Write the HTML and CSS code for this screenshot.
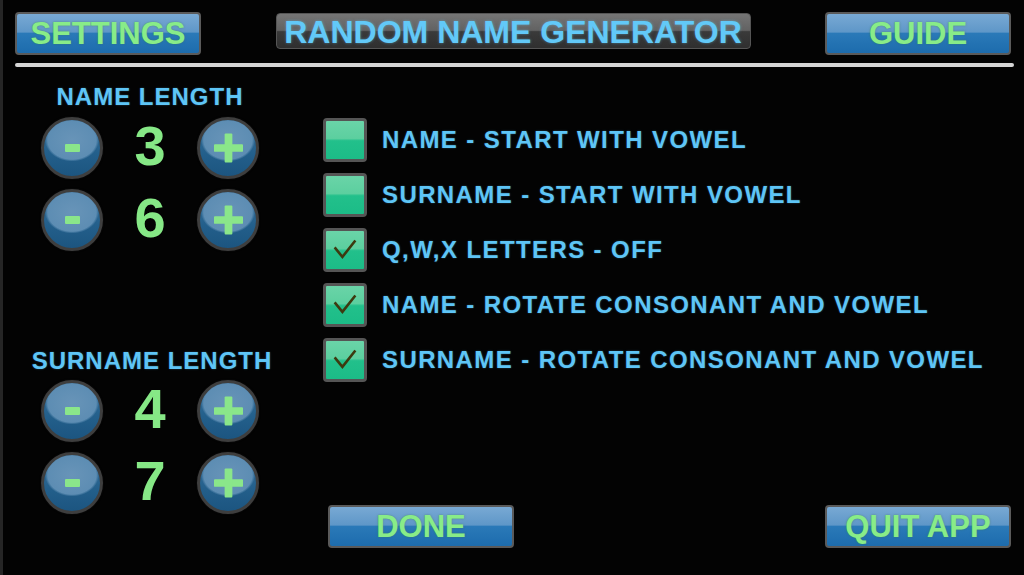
FILE: index.html
```html
<!DOCTYPE html>
<html>
<head>
<meta charset="utf-8">
<link rel="stylesheet" href="styles.css">
</head>
<body>
<div class="app">
  <header class="header">
    <div class="btn">SETTINGS</div>
    <div class="title">RANDOM NAME GENERATOR</div>
    <div class="btn">GUIDE</div>
  </header>
  <div class="rule"></div>
  <div class="content">
    <section class="left">
      <div class="label">NAME LENGTH</div>
      <div class="stepper">
        <div class="round"><svg class="minus" viewBox="0 0 15 8"><rect width="15" height="8" rx="1"/></svg></div>
        <div class="num">3</div>
        <div class="round"><svg class="plus" viewBox="0 0 30 30"><rect x="0" y="11" width="30" height="8" rx="1"/><rect x="11" y="0" width="8" height="30" rx="1"/></svg></div>
      </div>
      <div class="stepper second">
        <div class="round"><svg class="minus" viewBox="0 0 15 8"><rect width="15" height="8" rx="1"/></svg></div>
        <div class="num">6</div>
        <div class="round"><svg class="plus" viewBox="0 0 30 30"><rect x="0" y="11" width="30" height="8" rx="1"/><rect x="11" y="0" width="8" height="30" rx="1"/></svg></div>
      </div>
      <div class="label surname">SURNAME LENGTH</div>
      <div class="stepper">
        <div class="round"><svg class="minus" viewBox="0 0 15 8"><rect width="15" height="8" rx="1"/></svg></div>
        <div class="num">4</div>
        <div class="round"><svg class="plus" viewBox="0 0 30 30"><rect x="0" y="11" width="30" height="8" rx="1"/><rect x="11" y="0" width="8" height="30" rx="1"/></svg></div>
      </div>
      <div class="stepper second">
        <div class="round"><svg class="minus" viewBox="0 0 15 8"><rect width="15" height="8" rx="1"/></svg></div>
        <div class="num">7</div>
        <div class="round"><svg class="plus" viewBox="0 0 30 30"><rect x="0" y="11" width="30" height="8" rx="1"/><rect x="11" y="0" width="8" height="30" rx="1"/></svg></div>
      </div>
    </section>
    <section class="right">
      <ul class="options">
        <li class="option"><span class="box"></span><span class="opt-text">NAME - START WITH VOWEL</span></li>
        <li class="option"><span class="box"></span><span class="opt-text">SURNAME - START WITH VOWEL</span></li>
        <li class="option"><span class="box"><svg class="check" viewBox="0 0 44 44"><polyline points="10,19 19,30 34,11"/></svg></span><span class="opt-text">Q,W,X LETTERS - OFF</span></li>
        <li class="option"><span class="box"><svg class="check" viewBox="0 0 44 44"><polyline points="10,19 19,30 34,11"/></svg></span><span class="opt-text">NAME - ROTATE CONSONANT AND VOWEL</span></li>
        <li class="option"><span class="box"><svg class="check" viewBox="0 0 44 44"><polyline points="10,19 19,30 34,11"/></svg></span><span class="opt-text">SURNAME - ROTATE CONSONANT AND VOWEL</span></li>
      </ul>
      <div class="footer">
        <div class="btn">DONE</div>
        <div class="btn">QUIT APP</div>
      </div>
    </section>
  </div>
</div>
</body>
</html>
```

FILE: styles.css
```css
* { box-sizing: border-box; }
html, body {
  margin: 0;
  padding: 0;
  background: #030303;
}
body {
  font-family: "Liberation Sans", Arial, sans-serif;
  font-weight: bold;
}
.app {
  width: 1024px;
  height: 575px;
  border-left: 3px solid #262626;
  display: flex;
  flex-direction: column;
  background: #030303;
  overflow: hidden;
}
.header {
  display: flex;
  justify-content: space-between;
  align-items: flex-start;
  padding: 12px 13px 0 12px;
}
.btn {
  width: 186px;
  height: 43px;
  border: 2px solid #5a5a5a;
  border-radius: 4px;
  background: linear-gradient(to bottom, #78a9d4 0%, #5f97c8 46%, #2a79b8 50%, #1d6cad 100%);
  color: #88ec88;
  font-size: 31px;
  line-height: 39px;
  text-align: center;
  text-shadow: 0 0 2px rgba(60, 120, 60, 0.6);
}
.title {
  width: 475px;
  height: 36px;
  margin-top: 1px;
  border: 1px solid #555;
  border-radius: 4px;
  background: linear-gradient(to bottom, #757575 0%, #626262 48%, #3a3a3a 52%, #2f2f2f 100%);
  color: #62c9f8;
  font-size: 32px;
  line-height: 36px;
  text-align: center;
  text-shadow: 0 0 3px rgba(98, 201, 248, 0.5);
}
.rule {
  margin: 8px 10px 0 12px;
  height: 4px;
  border-radius: 2px;
  background: #d6d6d6;
}
.content {
  flex: 1;
  display: flex;
  align-items: stretch;
}
.left {
  width: 218px;
  margin-left: 38px;
  padding-top: 16px;
  display: flex;
  flex-direction: column;
}
.label {
  color: #5ec5f6;
  font-size: 24px;
  line-height: 28px;
  letter-spacing: 1px;
  text-align: center;
  white-space: nowrap;
  margin-bottom: 6px;
  text-shadow: 0 0 2px rgba(94, 197, 246, 0.4);
}
.label.surname {
  margin-top: 96px;
  margin-bottom: 5px;
  margin-left: -10px;
  margin-right: -14px;
}
.stepper {
  display: flex;
  align-items: center;
  height: 62px;
}
.stepper.second {
  margin-top: 10px;
}
.round {
  width: 62px;
  height: 62px;
  flex: none;
  border-radius: 50%;
  border: 3px solid #3e3e3e;
  background:
    radial-gradient(ellipse 48% 38% at 50% 36%, #6894b8 0, #5d8db3 90%, rgba(93,141,179,0) 100%),
    linear-gradient(to bottom, #3a729c 0%, #235f8b 60%, #1c5580 100%);
  display: flex;
  align-items: center;
  justify-content: center;
  box-shadow: 0 0 2px #111;
}
.minus {
  width: 15px;
  height: 8px;
  fill: #8ae68a;
}
.plus {
  width: 29px;
  height: 30px;
  fill: #8ae68a;
}
.num {
  flex: 1;
  text-align: center;
  color: #86e886;
  font-size: 56px;
  line-height: 56px;
  padding-bottom: 4px;
}
.right {
  flex: 1;
  margin-left: 64px;
  margin-right: 13px;
  margin-top: 51px;
  padding-bottom: 27px;
  display: flex;
  flex-direction: column;
}
.options {
  list-style: none;
  margin: 0;
  padding: 0;
  display: flex;
  flex-direction: column;
  gap: 11px;
}
.option {
  display: flex;
  align-items: center;
  gap: 15px;
  height: 44px;
}
.box {
  width: 44px;
  height: 44px;
  flex: none;
  border: 3px solid #555;
  border-radius: 4px;
  background: linear-gradient(to bottom, #6ad4a8 0%, #5ccf9f 46%, #22c08b 52%, #1cbc87 100%);
  display: flex;
}
.check {
  width: 38px;
  height: 38px;
  fill: none;
  stroke: #3d3a10;
  stroke-width: 3;
  stroke-linejoin: miter;
}
.opt-text {
  color: #5ec5f6;
  font-size: 24px;
  letter-spacing: 1.4px;
  white-space: nowrap;
  text-shadow: 0 0 2px rgba(94, 197, 246, 0.4);
}
.footer {
  margin-top: auto;
  display: flex;
  justify-content: space-between;
  padding-left: 5px;
}
```
